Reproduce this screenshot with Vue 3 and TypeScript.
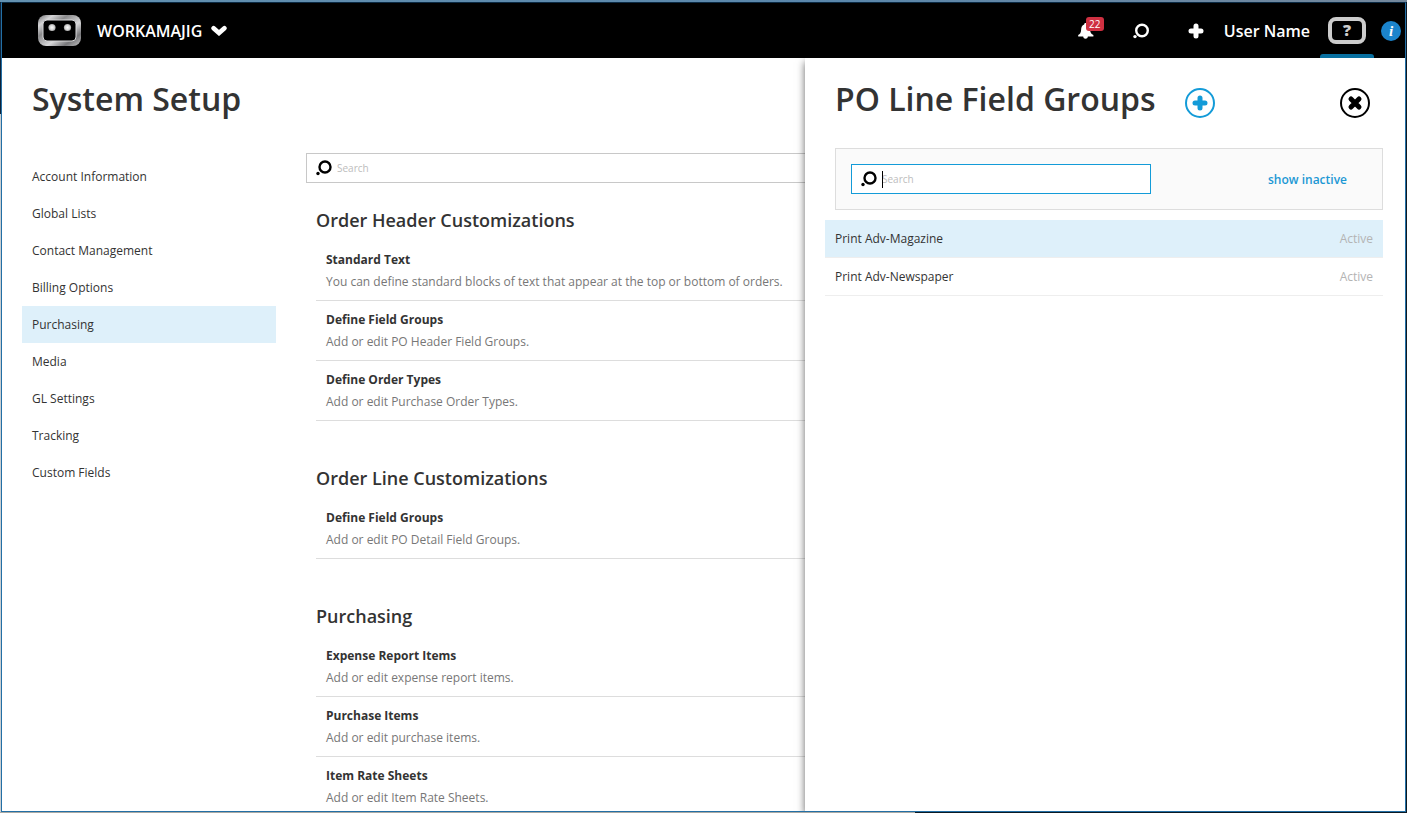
<script setup lang="ts">
import { ref } from 'vue'

interface SetupItem {
  title: string
  text: string
}
interface SetupSection {
  heading: string
  items: SetupItem[]
}

const nav: string[] = [
  'Account Information',
  'Global Lists',
  'Contact Management',
  'Billing Options',
  'Purchasing',
  'Media',
  'GL Settings',
  'Tracking',
  'Custom Fields',
]
const current = ref('Purchasing')

const sections: SetupSection[] = [
  {
    heading: 'Order Header Customizations',
    items: [
      {
        title: 'Standard Text',
        text: 'You can define standard blocks of text that appear at the top or bottom of orders.',
      },
      { title: 'Define Field Groups', text: 'Add or edit PO Header Field Groups.' },
      { title: 'Define Order Types', text: 'Add or edit Purchase Order Types.' },
    ],
  },
  {
    heading: 'Order Line Customizations',
    items: [{ title: 'Define Field Groups', text: 'Add or edit PO Detail Field Groups.' }],
  },
  {
    heading: 'Purchasing',
    items: [
      { title: 'Expense Report Items', text: 'Add or edit expense report items.' },
      { title: 'Purchase Items', text: 'Add or edit purchase items.' },
      { title: 'Item Rate Sheets', text: 'Add or edit Item Rate Sheets.' },
    ],
  },
]

const groups = [
  { name: 'Print Adv-Magazine', status: 'Active' },
  { name: 'Print Adv-Newspaper', status: 'Active' },
]
const selected = ref(groups[0].name)
const setupQuery = ref('')
const groupQuery = ref('')
</script>

<template>
  <div class="desktop">
    <div class="window">
      <header class="topbar">
        <svg class="logo" viewBox="0 0 44 32" aria-hidden="true">
          <defs>
            <linearGradient id="metal" x1="0" y1="0" x2="1" y2="1">
              <stop offset="0" stop-color="#6e6e70" />
              <stop offset="0.18" stop-color="#d4d4d6" />
              <stop offset="0.35" stop-color="#8a8a8c" />
              <stop offset="0.6" stop-color="#d8d8da" />
              <stop offset="0.8" stop-color="#77777a" />
              <stop offset="1" stop-color="#c4c4c6" />
            </linearGradient>
            <radialGradient id="eye">
              <stop offset="0" stop-color="#fff" />
              <stop offset="0.6" stop-color="#d8d8d8" />
              <stop offset="1" stop-color="#a4a4a4" />
            </radialGradient>
          </defs>
          <rect x="0" y="0" width="43" height="31" rx="8" fill="url(#metal)" />
          <rect x="5" y="5" width="33" height="21" rx="4" fill="#000" stroke="#d6d6d8" />
          <circle cx="14" cy="12.500" r="3.600" fill="url(#eye)" />
          <circle cx="29.500" cy="12.500" r="3.600" fill="url(#eye)" />
        </svg>
        <button class="brand" type="button">
          WORKAMAJIG
          <svg class="chevron" viewBox="0 0 16 11" aria-hidden="true">
            <path d="M2.600 3.200 8 8 13.400 3.200" fill="none" stroke="#fff" stroke-width="4.600" stroke-linecap="round" />
          </svg>
        </button>
        <span class="spacer"></span>
        <button class="tool bell" type="button" aria-label="Notifications">
          <svg viewBox="0 0 16 16" width="16" height="16" aria-hidden="true">
            <path
              d="M7.500 0C6.600 0 6.200 0.700 6.200 1.500 4 2.200 3.200 4.300 3.100 7 3 9.800 2 11 0.200 12V13.600H5.200C5.400 15 6.300 15.800 7.500 15.800S9.700 15 9.900 13.600H15.400V12C13.500 11 12.200 9.800 12.100 7 12 4.300 11 2.200 8.800 1.500 8.800 0.700 8.400 0 7.500 0Z"
              fill="#fff"
            />
          </svg>
          <span class="badge">22</span>
        </button>
        <button class="tool find" type="button" aria-label="Search">
          <svg viewBox="0 0 16 16" width="16" height="16" aria-hidden="true">
            <circle cx="9" cy="7.500" r="5.800" fill="none" stroke="#fff" stroke-width="2.400" />
            <circle cx="2" cy="13.600" r="1.700" fill="#fff" />
          </svg>
        </button>
        <button class="tool add" type="button" aria-label="New">
          <svg viewBox="0 0 16 16" width="16" height="16" aria-hidden="true">
            <path d="M8 3V13M3 8H13" fill="none" stroke="#fff" stroke-width="5" stroke-linecap="round" />
          </svg>
        </button>
        <button class="user" type="button">User Name</button>
        <button class="help" type="button" aria-label="Help"><span>?</span></button>
        <button class="info" type="button" aria-label="Information"><i>i</i></button>
      </header>

      <div class="body">
        <main class="setup">
          <h1>System Setup</h1>
          <div class="columns">
            <nav class="side">
              <a
                v-for="n in nav"
                :key="n"
                href="#"
                :class="{ on: n === current }"
                @click.prevent="current = n"
                >{{ n }}</a
              >
            </nav>
            <div class="content">
              <label class="search">
                <svg viewBox="0 0 16 16" width="16" height="16" aria-hidden="true">
                  <circle cx="9" cy="7" r="5.500" fill="none" stroke="#000" stroke-width="2.400" />
                  <circle cx="2" cy="13.500" r="1.700" fill="#000" />
                </svg>
                <input v-model="setupQuery" type="text" placeholder="Search" aria-label="Search settings" />
              </label>
              <section v-for="s in sections" :key="s.heading">
                <h2>{{ s.heading }}</h2>
                <a v-for="i in s.items" :key="i.title" class="entry" href="#" @click.prevent>
                  <strong>{{ i.title }}</strong>
                  <span>{{ i.text }}</span>
                </a>
              </section>
            </div>
          </div>
        </main>

        <aside class="panel">
          <div class="panel-head">
            <h1>PO Line Field Groups</h1>
            <button class="round blue" type="button" aria-label="Add group">
              <svg viewBox="0 0 16 16" width="16" height="16" aria-hidden="true">
                <path d="M8 3V13M3 8H13" fill="none" stroke="#139bd8" stroke-width="5" stroke-linecap="round" />
              </svg>
            </button>
            <span class="spacer"></span>
            <button class="round" type="button" aria-label="Close">
              <svg viewBox="0 0 16 16" width="16" height="16" aria-hidden="true">
                <path d="M4 4 12 12M12 4 4 12" fill="none" stroke="#000" stroke-width="5" stroke-linecap="round" />
              </svg>
            </button>
          </div>
          <div class="filter">
            <label class="search active">
              <svg viewBox="0 0 16 16" width="16" height="16" aria-hidden="true">
                <circle cx="9" cy="7" r="5.500" fill="none" stroke="#000" stroke-width="2.400" />
                <circle cx="2" cy="13.500" r="1.700" fill="#000" />
              </svg>
              <span class="caret"></span>
              <input v-model="groupQuery" type="text" placeholder="Search" aria-label="Search groups" />
            </label>
            <button class="link" type="button">show inactive</button>
          </div>
          <ul class="groups">
            <li v-for="g in groups" :key="g.name">
              <button type="button" :class="{ on: g.name === selected }" @click="selected = g.name">
                <span>{{ g.name }}</span>
                <em>{{ g.status }}</em>
              </button>
            </li>
          </ul>
        </aside>
      </div>
    </div>
  </div>
</template>

<style>
body {
  margin: 0;
}
</style>

<style scoped>
* {
  box-sizing: border-box;
}
.desktop {
  display: flex;
  height: 100vh;
  padding: 2px 1px 1px;
  background:
    linear-gradient(90deg, #6391b0, #5b87ab 60%, #74889c) top / 100% 2px no-repeat,
    linear-gradient(90deg, #a9a9a4 65%, #0b1a24 65%) bottom / 100% 1px no-repeat,
    linear-gradient(#0e1a26, #0b1a24) right / 1px 100% no-repeat,
    linear-gradient(#0d2238 14%, #c9ced2 14%) left / 1px 100% no-repeat;
  font-family: 'Open Sans', sans-serif;
  font-size: 12px;
  color: #333;
}
.window {
  flex: 1;
  min-width: 0;
  display: flex;
  flex-direction: column;
  border: 1px solid #236fa5;
  border-top-color: #0b2a44;
  background: #fff;
}
button {
  padding: 0;
  border: 0;
  background: none;
  color: inherit;
  font: inherit;
  cursor: pointer;
}
a {
  color: inherit;
  text-decoration: none;
}
svg {
  display: block;
  flex: none;
}
.spacer {
  flex: 1;
}
.topbar {
  flex: none;
  display: flex;
  align-items: center;
  height: 55px;
  padding: 0 4px 0 36px;
  background: #000;
  color: #fff;
}
.logo {
  width: 44px;
  height: 32px;
}
.brand {
  display: flex;
  align-items: center;
  gap: 9px;
  margin-left: 15px;
  font-size: 16px;
  font-weight: 600;
}
.chevron {
  width: 16px;
  height: 11px;
}
.tool {
  position: relative;
}
.bell {
  margin-right: 39px;
}
.badge {
  position: absolute;
  left: 8px;
  top: -6px;
  width: 18px;
  border-radius: 3px;
  background: #cf3041;
  font-size: 10px;
  line-height: 14px;
  text-align: center;
}
.find {
  margin-right: 39px;
}
.add {
  margin-right: 20px;
}
.user {
  margin-right: 10px;
  font-size: 16px;
  font-weight: 600;
}
.help {
  position: relative;
  align-self: stretch;
  display: flex;
  align-items: center;
  justify-content: center;
  width: 54px;
  margin-right: 7px;
}
.help::after {
  content: '';
  position: absolute;
  left: 0;
  right: 0;
  bottom: 0;
  height: 4px;
  border-radius: 3px 3px 0 0;
  background: #086f9f;
}
.help span {
  width: 38px;
  height: 27px;
  border: 4px solid #ccc;
  border-radius: 8px;
  color: #ccc;
  font-size: 16px;
  font-weight: 800;
  line-height: 19px;
}
.info {
  width: 20px;
  height: 20px;
  border-radius: 50%;
  background: #1b84cc;
  font: bold 15px/20px 'Liberation Serif', serif;
}
.body {
  flex: 1;
  min-height: 0;
  display: flex;
}
.setup {
  flex: 1;
  min-width: 0;
  overflow: hidden;
  padding: 20px 0 0 20px;
}
h1 {
  margin: 0;
  font-size: 32px;
  font-weight: 600;
  line-height: 42px;
  white-space: nowrap;
}
.setup h1 {
  padding-left: 10px;
}
.columns {
  display: flex;
  gap: 30px;
  margin-top: 33px;
}
.side {
  flex: none;
  width: 254px;
  padding-top: 5px;
}
.side a {
  display: block;
  padding: 0 10px;
  line-height: 37px;
}
.side .on,
.groups .on {
  background: #def0fa;
}
.content {
  flex: 1;
  min-width: 0;
}
.search {
  display: flex;
  align-items: center;
  gap: 5px;
  height: 30px;
  padding: 0 9px;
  border: 1px solid #c8c8c8;
  border-right: 0;
  background: #fff;
}
.search input {
  flex: 1;
  min-width: 0;
  padding: 0;
  border: 0;
  outline: 0;
  background: none;
  font: 10px 'Open Sans', sans-serif;
  color: #333;
}
.search input::placeholder {
  color: #bdbdbd;
  opacity: 1;
}
.content .search {
  margin-bottom: 16px;
}
section {
  margin: 0 0 36px 10px;
}
h2 {
  margin: 0;
  font-size: 18px;
  font-weight: 600;
  line-height: 42px;
}
.entry {
  display: block;
  padding: 8px 10px 7px;
  border-bottom: 1px solid #ddd;
  line-height: 22px;
  white-space: nowrap;
}
.entry strong,
.entry span {
  display: block;
}
.entry span {
  color: #777;
}
.panel {
  position: relative;
  flex: none;
  width: 600px;
  padding: 20px 22px 0 20px;
  background: #fff;
  box-shadow: 0 4px 8px rgba(0, 0, 0, 0.6);
  clip-path: inset(0 0 0 -12px);
}
.panel-head {
  display: flex;
  align-items: flex-start;
  padding: 0 13px 0 10px;
}
.round {
  display: flex;
  align-items: center;
  justify-content: center;
  width: 30px;
  height: 30px;
  margin-top: 10px;
  border: 2px solid #000;
  border-radius: 50%;
}
.blue {
  margin-left: 29px;
  border-color: #139bd8;
}
.filter {
  display: flex;
  align-items: center;
  justify-content: space-between;
  margin: 28px 0 10px 10px;
  padding: 15px 35px 15px 15px;
  border: 1px solid #ddd;
  background: #fafafa;
}
.search.active {
  position: relative;
  width: 300px;
  border: 1px solid #139bd8;
}
.caret {
  position: absolute;
  left: 30px;
  top: 6px;
  width: 1px;
  height: 17px;
  background: #000;
}
.link {
  color: #1c98d4;
  font-weight: 600;
}
.groups {
  margin: 0;
  padding: 0;
  list-style: none;
}
.groups button {
  display: flex;
  justify-content: space-between;
  width: 100%;
  padding: 0 10px;
  border-bottom: 1px solid #eee;
  line-height: 37px;
}
.groups em {
  color: #b4b4b4;
  font-style: normal;
}
</style>
